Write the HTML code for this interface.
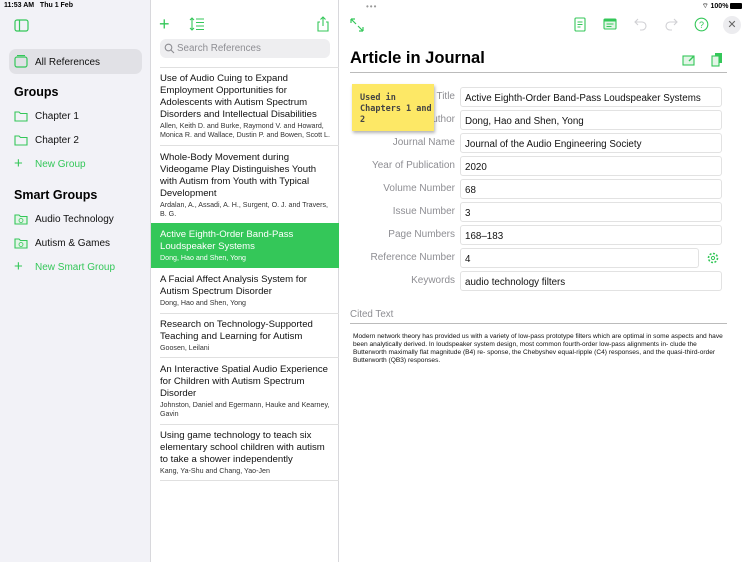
<!DOCTYPE html>
<html><head><meta charset="utf-8"><style>
*{margin:0;padding:0;box-sizing:border-box}
body{width:750px;height:562px;overflow:hidden;font-family:"Liberation Sans",sans-serif;background:#fff;position:relative;color:#000}
.a{position:absolute}
#side{left:0;top:0;width:151px;height:562px;background:#f2f2f7;border-right:1px solid #d8d8dc}
#list{left:151px;top:0;width:188px;height:562px;background:#fff;border-right:1px solid #d8d8dc}
.si{font-size:10px;color:#111}
.g{color:#34c759}
.hd{font-size:12.5px;font-weight:bold}
.it{position:absolute;left:9px;width:175px;font-size:9.6px;line-height:12px;color:#111}
.au{font-size:7.1px;line-height:8.5px;color:#333;margin-top:1px}
.sep{position:absolute;left:9px;width:179px;height:1px;background:#e0e0e0}
.lb{position:absolute;width:115px;left:340px;text-align:right;font-size:10px;color:#8e8e93}
.in{position:absolute;left:460px;width:262px;height:20px;border:1px solid #e2e2e2;border-radius:3px;font-size:9.8px;padding:5px 4px;color:#111}
.st{z-index:5}
</style></head><body>

<div id="side" class="a">
 <svg class="a" style="left:14px;top:19px" width="15" height="13"><rect x="1" y="1" width="13" height="11" rx="2" fill="none" stroke="#34c759" stroke-width="1.2"/><line x1="5.5" y1="1" x2="5.5" y2="12" stroke="#34c759" stroke-width="1.2"/></svg>
 <div class="a" style="left:9px;top:49px;width:133px;height:25px;background:#e1e1e6;border-radius:7px"></div>
 <svg class="a" style="left:14px;top:54px" width="14" height="14"><rect x="1" y="3" width="12" height="10" rx="2" fill="none" stroke="#34c759" stroke-width="1.2"/><line x1="3" y1="1.5" x2="11" y2="1.5" stroke="#34c759"/></svg>
 <div class="a si" style="left:35px;top:57px">All References</div>
 <div class="a hd" style="left:14px;top:85px">Groups</div>
 <svg class="a" style="left:14px;top:110px" width="14" height="12"><path d="M1 2h4l1.5 1.5H13V11H1Z" fill="none" stroke="#34c759" stroke-width="1.1"/></svg>
 <div class="a si" style="left:35px;top:111px">Chapter 1</div>
 <svg class="a" style="left:14px;top:134px" width="14" height="12"><path d="M1 2h4l1.5 1.5H13V11H1Z" fill="none" stroke="#34c759" stroke-width="1.1"/></svg>
 <div class="a si" style="left:35px;top:135px">Chapter 2</div>
 <div class="a g" style="left:14px;top:155px;font-size:15px">+</div>
 <div class="a si g" style="left:35px;top:159px">New Group</div>
 <div class="a hd" style="left:14px;top:188px">Smart Groups</div>
 <svg class="a" style="left:14px;top:213px" width="14" height="12"><path d="M1 2h4l1.5 1.5H13V11H1Z" fill="#e3f5e7" stroke="#34c759" stroke-width="1.1"/><circle cx="7" cy="7.5" r="2" fill="none" stroke="#34c759" stroke-width=".8"/></svg>
 <div class="a si" style="left:35px;top:214px">Audio Technology</div>
 <svg class="a" style="left:14px;top:237px" width="14" height="12"><path d="M1 2h4l1.5 1.5H13V11H1Z" fill="#e3f5e7" stroke="#34c759" stroke-width="1.1"/><circle cx="7" cy="7.5" r="2" fill="none" stroke="#34c759" stroke-width=".8"/></svg>
 <div class="a si" style="left:35px;top:238px">Autism &amp; Games</div>
 <div class="a g" style="left:14px;top:258px;font-size:15px">+</div>
 <div class="a si g" style="left:35px;top:262px">New Smart Group</div>
</div>

<div id="list" class="a">
 <div class="a g" style="left:8px;top:14px;font-size:18px;line-height:20px">+</div>
 <svg class="a" style="left:38px;top:17px" width="16" height="14"><path d="M3 1v12M1 3l2-2 2 2M1 11l2 2 2-2M7 2h8M7 5.5h8M7 9h8M7 12.5h8" fill="none" stroke="#34c759" stroke-width="1.1"/></svg>
 <svg class="a" style="left:165px;top:16px" width="14" height="16"><path d="M4 6H2v9h10V6h-2M7 1v9M4.5 3.5L7 1l2.5 2.5" fill="none" stroke="#34c759" stroke-width="1.1"/></svg>
 <div class="a" style="left:9px;top:39px;width:170px;height:19px;background:#eeeef0;border-radius:6px;font-size:9.8px;color:#8e8e93;padding:4px 0 0 17px">Search References</div>
 <svg class="a" style="left:13px;top:43px" width="11" height="11"><circle cx="4.5" cy="4.5" r="3.3" fill="none" stroke="#8e8e93" stroke-width="1.1"/><line x1="7" y1="7" x2="10" y2="10" stroke="#8e8e93" stroke-width="1.1"/></svg>
 <div class="sep" style="top:67px"></div>
 <div class="it" style="top:73px">Use of Audio Cuing to Expand Employment Opportunities for Adolescents with Autism Spectrum Disorders and Intellectual Disabilities<div class="au">Allen, Keith D. and Burke, Raymond V. and Howard, Monica R. and Wallace, Dustin P. and Bowen, Scott L.</div></div>
 <div class="sep" style="top:145px"></div>
 <div class="it" style="top:152px">Whole-Body Movement during Videogame Play Distinguishes Youth with Autism from Youth with Typical Development<div class="au">Ardalan, A., Assadi, A. H., Surgent, O. J. and Travers, B. G.</div></div>
 <div class="a" style="left:0;top:223px;width:188px;height:45px;background:#34c759"></div>
 <div class="it" style="top:229px;color:#fff">Active Eighth-Order Band-Pass Loudspeaker Systems<div class="au" style="color:#fff">Dong, Hao and Shen, Yong</div></div>
 <div class="it" style="top:274px">A Facial Affect Analysis System for Autism Spectrum Disorder<div class="au">Dong, Hao and Shen, Yong</div></div>
 <div class="sep" style="top:313px"></div>
 <div class="it" style="top:319px">Research on Technology-Supported Teaching and Learning for Autism<div class="au">Goosen, Leilani</div></div>
 <div class="sep" style="top:357px"></div>
 <div class="it" style="top:364px">An Interactive Spatial Audio Experience for Children with Autism Spectrum Disorder<div class="au">Johnston, Daniel and Egermann, Hauke and Kearney, Gavin</div></div>
 <div class="sep" style="top:424px"></div>
 <div class="it" style="top:430px">Using game technology to teach six elementary school children with autism to take a shower independently<div class="au">Kang, Ya-Shu and Chang, Yao-Jen</div></div>
 <div class="sep" style="top:480px"></div>
</div>

<div class="a st" style="left:4px;top:2px;font-size:7px;font-weight:bold">11:53 AM&nbsp;&nbsp; Thu 1 Feb</div>
<div class="a st" style="left:366px;top:2px;font-size:8px;color:#999;letter-spacing:1px">•••</div>
<div class="a st" style="left:702px;top:2px;font-size:7px;font-weight:bold">⌔ 100% <span style="display:inline-block;width:12px;height:6px;background:#000;border-radius:1px;vertical-align:middle"></span></div>

<svg class="a" style="left:350px;top:18px" width="14" height="14"><path d="M1 1l5 5M1 1v4M1 1h4M13 13l-5-5M13 13v-4M13 13h-4" fill="none" stroke="#34c759" stroke-width="1.2"/></svg>
<svg class="a" style="left:574px;top:17px" width="12" height="15"><rect x="1" y="1" width="10" height="13" rx="1" fill="none" stroke="#34c759" stroke-width="1.1"/><path d="M3.5 5h5M3.5 7.5h5M3.5 10h3" stroke="#34c759"/></svg>
<svg class="a" style="left:603px;top:18px" width="14" height="12"><rect x="1" y="1" width="12" height="10" rx="1" fill="#e3f5e7" stroke="#34c759" stroke-width="1.1"/><rect x="1" y="1" width="12" height="2.5" fill="#34c759"/><path d="M3.5 6h7M3.5 8.5h5" stroke="#34c759"/></svg>
<svg class="a" style="left:634px;top:18px" width="14" height="13"><path d="M4 1L1 4l3 3M1 4h7a4 4 0 010 8H6" fill="none" stroke="#d0d0d4" stroke-width="1.1"/></svg>
<svg class="a" style="left:664px;top:18px" width="14" height="13"><path d="M10 1l3 3-3 3M13 4H6a4 4 0 000 8h2" fill="none" stroke="#d0d0d4" stroke-width="1.1"/></svg>
<svg class="a" style="left:694px;top:17px" width="15" height="15"><circle cx="7.5" cy="7.5" r="6.3" fill="none" stroke="#34c759" stroke-width="1.1"/><text x="7.5" y="11" font-size="9" text-anchor="middle" fill="#34c759" font-family="Liberation Sans">?</text></svg>
<div class="a" style="left:723px;top:16px;width:18px;height:18px;border-radius:9px;background:#ececef;color:#666;font-size:11px;text-align:center;line-height:18px">✕</div>

<div class="a" style="left:350px;top:49px;font-size:16.5px;font-weight:bold">Article in Journal</div>
<svg class="a" style="left:682px;top:54px" width="14" height="12"><rect x="1" y="2" width="11" height="9" fill="#e3f5e7" stroke="#34c759" stroke-width="1.1"/><path d="M7 7l5-5" stroke="#34c759" stroke-width="1.4"/></svg>
<svg class="a" style="left:711px;top:52px" width="12" height="15"><rect x="4" y="1" width="7" height="10" fill="#34c759"/><rect x="1" y="4" width="7" height="10" fill="#e3f5e7" stroke="#34c759" stroke-width="1.1"/></svg>
<div class="a" style="left:350px;top:72px;width:377px;height:1px;background:#bbb"></div>

<div class="lb" style="top:91px">Article Title</div><div class="in" style="top:87px">Active Eighth-Order Band-Pass Loudspeaker Systems</div>
<div class="lb" style="top:114px">Author</div><div class="in" style="top:110px">Dong, Hao and Shen, Yong</div>
<div class="lb" style="top:137px">Journal Name</div><div class="in" style="top:133px">Journal of the Audio Engineering Society</div>
<div class="lb" style="top:160px">Year of Publication</div><div class="in" style="top:156px">2020</div>
<div class="lb" style="top:183px">Volume Number</div><div class="in" style="top:179px">68</div>
<div class="lb" style="top:206px">Issue Number</div><div class="in" style="top:202px">3</div>
<div class="lb" style="top:229px">Page Numbers</div><div class="in" style="top:225px">168–183</div>
<div class="lb" style="top:252px">Reference Number</div><div class="in" style="top:248px;width:239px">4</div>
<svg class="a" style="left:707px;top:252px" width="12" height="12"><circle cx="6" cy="6" r="4.5" fill="none" stroke="#34c759" stroke-width="1.6" stroke-dasharray="2 1.5"/><circle cx="6" cy="6" r="1.6" fill="none" stroke="#34c759"/></svg>
<div class="lb" style="top:275px">Keywords</div><div class="in" style="top:271px">audio technology filters</div>

<div class="a" style="left:352px;top:84px;width:82px;height:47px;background:#fde866;box-shadow:1px 2px 3px rgba(0,0,0,.3);font-family:'DejaVu Sans Mono',monospace;font-weight:bold;font-size:8.5px;line-height:11px;color:#444;padding:9px 0 0 8px">Used in Chapters 1 and 2</div>

<div class="a" style="left:350px;top:309px;font-size:9.8px;color:#8e8e93">Cited Text</div>
<div class="a" style="left:350px;top:323px;width:377px;height:1px;background:#bbb"></div>
<div class="a" style="left:353px;top:333px;width:372px;font-size:6.6px;line-height:7.9px;color:#111">Modern network theory has provided us with a variety of low-pass prototype filters which are optimal in some aspects and have been analytically derived. In loudspeaker system design, most common fourth-order low-pass alignments in- clude the Butterworth maximally flat magnitude (B4) re- sponse, the Chebyshev equal-ripple (C4) responses, and the quasi-third-order Butterworth (QB3) responses.</div>
</body></html>
